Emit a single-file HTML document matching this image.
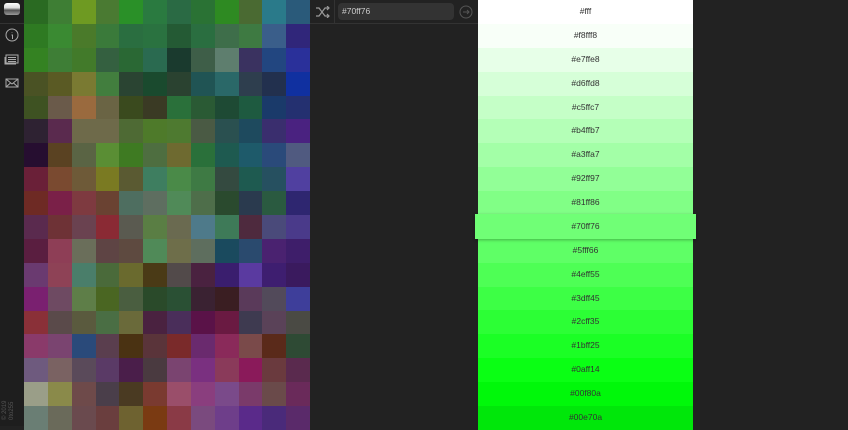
<!DOCTYPE html>
<html><head><meta charset="utf-8"><style>
*{margin:0;padding:0;box-sizing:border-box}
body{width:848px;height:426px;background:#222;position:relative;overflow:hidden;font-family:"Liberation Sans",sans-serif}
#side{position:absolute;left:0;top:0;width:24px;height:426px;background:#1e1e1e}
#grid{position:absolute;left:24px;top:0;width:286px;height:430px;display:grid;grid-template-columns:repeat(12,1fr);grid-auto-rows:23.9px}
#mid{position:absolute;left:310px;top:0;width:168px;height:426px;background:#222}
#list{position:absolute;left:478px;top:0;width:215px}
#list div{height:23.88px;line-height:23.88px;text-align:center;font-size:8.5px;color:#333}
#hl{position:absolute;left:475px;top:214px;width:221px;height:25px;background:#70ff76;box-shadow:0 1px 3px rgba(0,0,0,.3);text-align:center;line-height:25px;font-size:8.5px;color:#333}
</style></head><body>
<div id="side">
<div style="position:absolute;left:4px;top:3px;width:16px;height:12px;border-radius:3px;background:linear-gradient(#fff,#ddd 40%,#555 60%,#999)"></div>
<div style="position:absolute;left:0;top:23px;width:24px;height:1px;background:#333"></div>
<svg width="24" height="100" style="position:absolute;left:0;top:0" fill="none" stroke="#aaa" stroke-width="1">
<circle cx="12" cy="35" r="6"/><path d="M12 32.5v.5M11.5 35h1v4"/>
<rect x="6" y="55" width="12" height="8"/><path d="M8 57.5h8M8 59.5h8M8 61.5h8M5 57v7h11"/>
<rect x="6" y="79" width="12" height="8"/><path d="M6 79l6 5 6-5M6 87l4.5-4M18 87l-4.5-4"/>
</svg>
<div style="position:absolute;left:2px;top:420px;transform:rotate(-90deg);transform-origin:0 0;font-size:6px;color:#555;line-height:7px;white-space:nowrap">© 2019<br>0to255</div>
</div>
<div id="grid"></div>
<div id="mid">
<div style="position:absolute;left:0;top:23px;width:168px;height:1px;background:#333"></div>
<div style="position:absolute;left:24px;top:0;width:1px;height:23px;background:#333"></div>
<svg width="16" height="12" style="position:absolute;left:5px;top:6px" fill="none" stroke="#999" stroke-width="1.2"><path d="M1 2h3l6 8h4M1 10h3l6-8h4M12 0l2 2-2 2M12 8l2 2-2 2"/></svg>
<div style="position:absolute;left:28px;top:3px;width:116px;height:17px;background:#333;border-radius:4px;color:#ccc;font-size:8.5px;line-height:17px;padding-left:4px">#70ff76</div>
<svg width="14" height="14" style="position:absolute;left:149px;top:5px" fill="none" stroke="#555" stroke-width="1"><circle cx="7" cy="7" r="6"/><path d="M4 7h6M8 5l2 2-2 2"/></svg>
</div>
<div id="list"></div>
<div id="hl">#70ff76</div>
<script>
var c="2a6a22 3e7e34 6e9a22 4a7a32 2a9028 2a7a40 2a6a44 2a7234 2e8a22 4a6a32 2a7a8a 2a5a7a 2e7a22 3a8a32 4a7a2a 3a7a3a 2a6e40 2a7240 245a34 2a6e40 3e6e4a 3e7a42 3a5e8a 30267a 348222 3e7e36 427a2a 346040 2a6834 2a6a50 1a3a2e 3e5e48 5e7e6e 3a3260 224680 2a309a 4a5224 5a5a24 7a7a32 427e3e 2a4432 1a4a2e 2a4230 205454 2a6868 2e3e4e 22304e 1030a0 3e5222 6a5a4a 9a6a3e 6a6444 3a4a1e 3a3a24 2a703a 2a5a34 1e4a34 1e5a40 1a3a6a 243070 2e2232 5a2a4e 6e6a4a 6e6a4a 4e6a34 4e7a2a 4e7a30 4a5a44 2a5050 1e4a5e 3a2e6e 4a2280 260e30 5a4222 5a6444 5a8e34 3e7a22 4e6e40 6e6a30 2a703a 1e5a50 1e5a6a 2a4a7a 505a80 6a2038 7a4a30 6e5a38 7a7a22 5a5a32 3e7e60 4a8a48 3e7a44 344a40 1e5a50 265060 5040a0 6e2a24 7a2048 7e3a40 6a4232 4e6e60 5e6e60 508a58 4e6e4a 2a4a2e 2a3a4e 2a5a40 2e2670 5a2a4e 6e3236 6a4250 8a2a34 5a5a50 5a7e44 6a6a50 4e7a8a 3e7a58 4e2a3e 4a4a7a 4a3a8a 5a1e40 8e3e56 6a6e5a 5e4444 5e4a40 508a58 6e6e4a 5e6e5e 1a4a5e 2a4a6e 4a2270 3e1e6a 6a3a70 8e4256 4a7e6a 4a6a3a 6a6a2e 4a3a16 524a4a 4a2240 3a1e6e 5a3aa0 3e1e70 3a1a5e 7a2070 6e4a62 5e7e48 4a6622 4a5e40 2a4a2a 2a5034 3a2232 3a1e22 5a3a5a 524a5a 3e3e9a 8a3038 5a4a4a 5a5a3e 4a6e44 6a6a3a 4a2240 4a2e5a 5a1248 6a1a42 3e3a50 5a4258 4a4a44 8a3a6a 7a4470 2a4a7a 5a3e4e 4a3212 5a343a 7a2a2a 6a2a6e 8a2a5a 7a4a4a 5a2a1a 2e4a34 6e5a7e 7a6262 5a4a5a 5a3a66 4a1e4a 4a3a40 7a4470 7a3080 8a3a5a 8a1a5a 6a3a3e 5a2a4e 9a9e88 8a8a4a 6e4a4a 4a3e4a 4a3a22 7a3a30 9a4e6a 8a3e7e 7a4a8a 7a3a6a 6a4a4a 6a2a5a 6a7e74 6a6a5a 6a4a4e 6a3e3e 6e6230 7a3a12 8a3a46 7a4a7e 6e3e8a 5a2a8a 4a2a7a 5a2a6a".split(" ");
var g=document.getElementById("grid"),h="";c.forEach(function(x){h+='<div style="background:#'+x+'"></div>'});g.innerHTML=h;
var l="fff f8fff8 e7ffe8 d6ffd8 c5ffc7 b4ffb7 a3ffa7 92ff97 81ff86 70ff76 5fff66 4eff55 3dff45 2cff35 1bff25 0aff14 00f80a 00e70a".split(" ");
h="";l.forEach(function(x){h+='<div style="background:#'+x+'">#'+x+'</div>'});document.getElementById("list").innerHTML=h;
</script>
</body></html>
